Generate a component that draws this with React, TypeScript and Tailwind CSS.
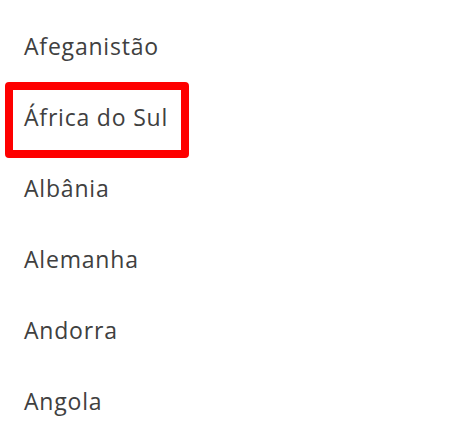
import React from 'react';

const countries = ['Afeganistão', 'África do Sul', 'Albânia', 'Alemanha', 'Andorra', 'Angola'];

const App: React.FC = () => {
    return (
        <div className="w-[474px] h-[442px] bg-white overflow-hidden pt-[11px]" style={{ fontFamily: '"Open Sans", "Noto Sans", sans-serif' }}>
            {countries.map((name, i) => (
                <div key={name} className="relative h-[71px] flex items-center pl-6">
                    <span className="text-[23px] leading-none tracking-[0.8px] text-[#404040]">{name}</span>
                    {i === 1 && (
                        <div className="absolute top-0 left-[5px] w-[184px] h-[76px] border-8 border-[#fe0000] rounded-[4px]"></div>
                    )}
                </div>
            ))}
        </div>
    );
};

export default App;
